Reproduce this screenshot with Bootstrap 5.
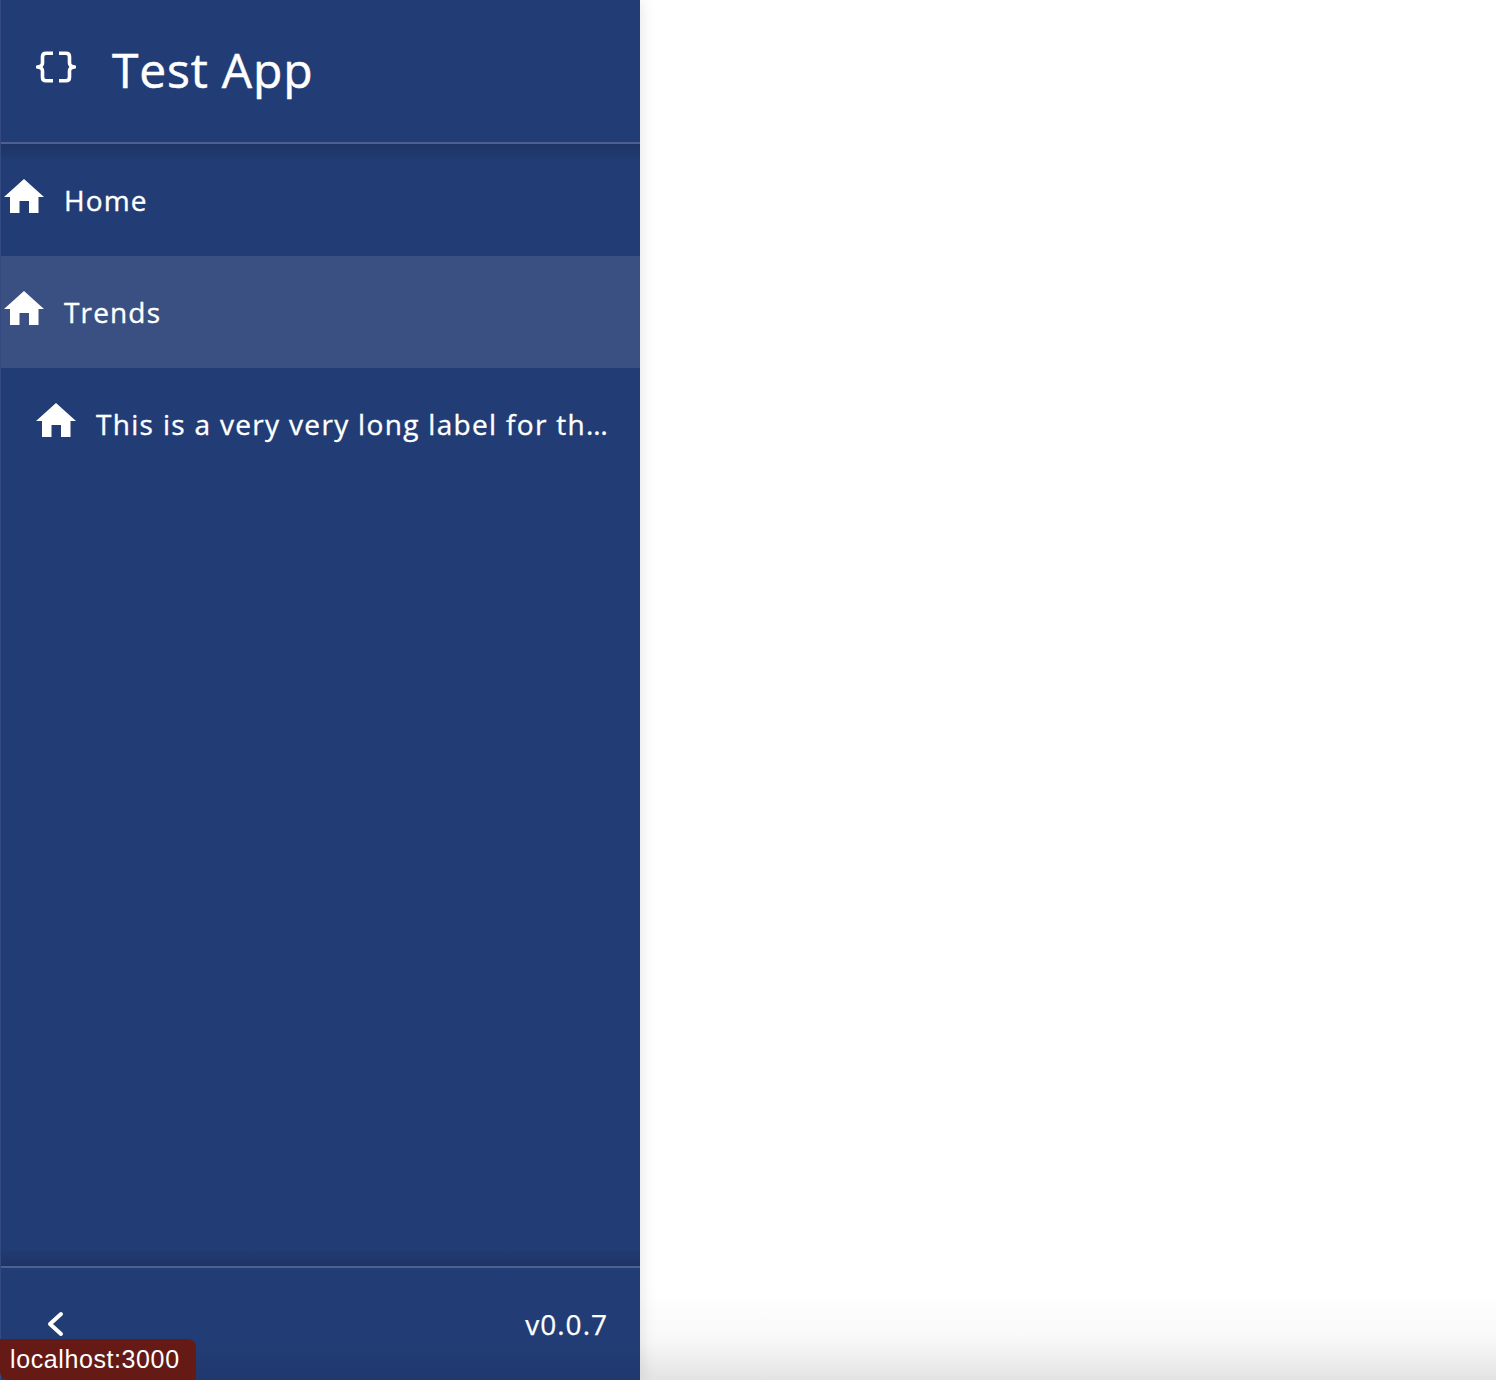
<!DOCTYPE html>
<html lang="en">
<head>
<meta charset="utf-8">
<title>Test App</title>
<link rel="stylesheet" href="https://cdn.jsdelivr.net/npm/bootstrap@5.3.0/dist/css/bootstrap.min.css">
<style>
html, body { height: 100%; }
body { font-family: "Open Sans", "Liberation Sans", sans-serif; background: #fff; overflow: hidden; }
.app-shell { height: 1380px; position: relative; background: linear-gradient(to bottom, #fff 0, #fff 1290px, #f8f8f8 1340px, #e3e3e3 1380px); }
.side-panel { width: 640px; height: 100%; background: #223d75; color: #fff; box-shadow: 0 0 16px rgba(0,0,0,.12); border-left: 1px solid #33497f; position: relative; }
.side-head { height: 144px; padding-left: 35px; border-bottom: 2px solid #4c6192; }
.side-head svg { margin-top: -8px; }
.app-title { font-size: 48px; line-height: 1; margin-left: 36px; letter-spacing: .8px; -webkit-text-stroke: .5px #fff; margin-top: -2px; }
.side-items { position: relative; }
.side-items::before, .foot-shade { content: ""; display: block; position: absolute; left: 0; right: 0; height: 18px; pointer-events: none; }
.side-items::before { top: 0; background: linear-gradient(to bottom, rgba(20,35,70,.35), rgba(20,35,70,0)); }
.foot-shade { top: -20px; background: linear-gradient(to top, rgba(20,35,70,.35), rgba(20,35,70,0)); }
.side-row { height: 112px; padding-left: 3px; padding-right: 32px; font-size: 28px; letter-spacing: 1.15px; -webkit-text-stroke: .35px #fff; color: #fff; }
.side-row.is-current { background: #3b5082; }
.side-row.is-nested { padding-left: 35px; letter-spacing: 1.32px; }
.side-row svg { flex: 0 0 40px; margin-top: -8px; }
.row-label { margin-left: 20px; white-space: nowrap; line-height: 1.4; margin-top: 1px; }
.side-foot { height: 114px; border-top: 2px solid #4c6192; padding: 0 32px 0 35px; font-size: 28px; letter-spacing: 1px; -webkit-text-stroke: .25px #fff; position: relative; background: linear-gradient(to bottom, #223d75 0, #223d75 70%, #20386d 100%); }
.url-hint { position: absolute; left: -1px; bottom: 0; height: 41px; padding: 0 16px 0 10px; background: #661a16; color: #fff; font-family: "Liberation Sans", sans-serif; font-size: 25px; letter-spacing: .6px; line-height: 41px; border-radius: 0 8px 0 8px; -webkit-text-stroke: 0; }
</style>
</head>
<body>
<div class="app-shell">
  <aside class="side-panel d-flex flex-column">
    <header class="side-head d-flex align-items-center">
      <svg width="40" height="32" viewBox="0 0 40 32" fill="none" stroke="#fff" stroke-width="3.6" stroke-linejoin="round"><path d="M17 2.200H10Q6.500 2.200 6.500 5.700V12Q6.500 15.500 1.500 16Q6.500 16.500 6.500 20V26.300Q6.500 29.800 10 29.800H17"/><path d="M23 2.200H30Q33.500 2.200 33.500 5.700V12Q33.500 15.500 38.500 16Q33.500 16.500 33.500 20V26.300Q33.500 29.800 30 29.800H23"/></svg>
      <span class="app-title">Test App</span>
    </header>
    <nav class="side-items flex-grow-1">
      <a class="side-row d-flex align-items-center text-decoration-none" href="#">
        <svg width="40" height="34" viewBox="0 0 40 34" fill="#fff"><path d="M20 0 40 18H34.500V34H25V22H15.500V34H6V18H0Z"/></svg>
        <span class="row-label">Home</span>
      </a>
      <a class="side-row is-current d-flex align-items-center text-decoration-none" href="#">
        <svg width="40" height="34" viewBox="0 0 40 34" fill="#fff"><path d="M20 0 40 18H34.500V34H25V22H15.500V34H6V18H0Z"/></svg>
        <span class="row-label">Trends</span>
      </a>
      <a class="side-row is-nested d-flex align-items-center text-decoration-none" href="#">
        <svg width="40" height="34" viewBox="0 0 40 34" fill="#fff"><path d="M20 0 40 18H34.500V34H25V22H15.500V34H6V18H0Z"/></svg>
        <span class="row-label">This is a very very long label for th…</span>
      </a>
    </nav>
    <footer class="side-foot d-flex align-items-center justify-content-between">
      <span class="foot-shade"></span>
      <svg class="ms-2" width="24" height="26" viewBox="0 0 24 26" fill="none" stroke="#fff" stroke-width="4" stroke-linecap="round" stroke-linejoin="round"><path d="M17 3 6 13 17 23"/></svg>
      <span>v0.0.7</span>
    </footer>
    <div class="url-hint">localhost:3000</div>
  </aside>
</div>
</body>
</html>
